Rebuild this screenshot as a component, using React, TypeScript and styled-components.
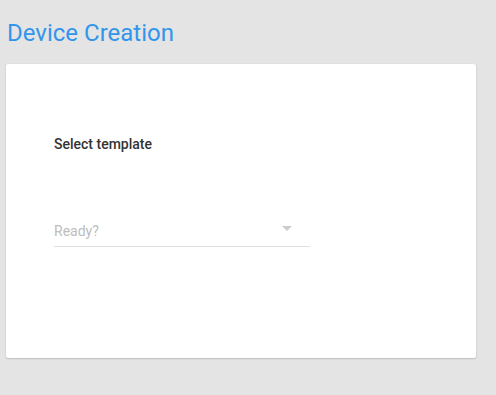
import React from 'react';
import styled, { createGlobalStyle } from 'styled-components';

const GlobalStyle = createGlobalStyle`
  html, body {
    margin: 0;
    padding: 0;
    background: #e4e4e4;
    font-family: Roboto, "Liberation Sans", sans-serif;
  }
`;

function App() {
  return (
    <Page>
      <GlobalStyle />
      <Title>Device Creation</Title>
      <Card>
        <Label>Select template</Label>
        <Select>
          <Placeholder>Ready?</Placeholder>
          <Arrow />
        </Select>
      </Card>
    </Page>
  );
}

const Page = styled.div`
  padding: 0 20px 0 6px;
  height: 395px;
  box-sizing: border-box;
`;

const Title = styled.h1`
  margin: 0;
  padding: 19px 0 0 1px;
  height: 64px;
  box-sizing: border-box;
  font-size: 24px;
  font-weight: 400;
  line-height: 28px;
  color: #3196eb;
`;

const Card = styled.div`
  width: 470px;
  height: 294px;
  box-sizing: border-box;
  background: #fff;
  border-radius: 2px;
  box-shadow: 0 1px 2px rgba(0, 0, 0, 0.16), 0 0 1px rgba(0, 0, 0, 0.12);
  padding: 71px 48px 0;
`;

const Label = styled.div`
  font-size: 14px;
  font-weight: 500;
  line-height: 18px;
  color: #333;
`;

const Select = styled.div`
  margin-top: 62px;
  width: 256px;
  height: 32px;
  box-sizing: border-box;
  border-bottom: 1px solid #e0e0e0;
  display: flex;
  align-items: center;
  justify-content: space-between;
  padding-right: 18px;
`;

const Placeholder = styled.span`
  font-size: 14px;
  color: #bdbdbd;
`;

const Arrow = styled.span`
  width: 0;
  height: 0;
  margin-top: -4px;
  border-left: 5px solid transparent;
  border-right: 5px solid transparent;
  border-top: 5px solid #ccc;
`;

export default App;
